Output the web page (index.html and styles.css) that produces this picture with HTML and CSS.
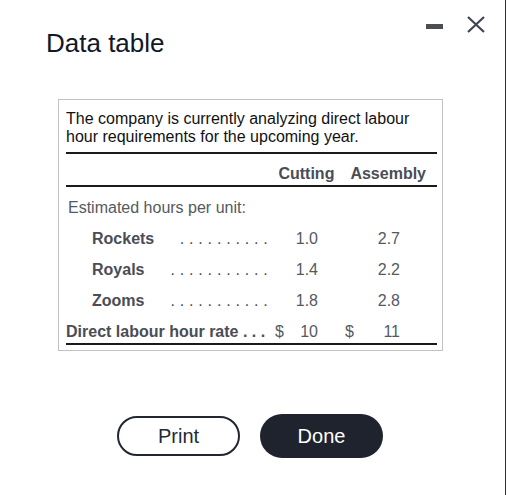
FILE: index.html
```html
<!DOCTYPE html>
<html lang="en">
<head>
<meta charset="utf-8">
<title>Data table</title>
<link rel="stylesheet" href="styles.css">
</head>
<body>
<div class="dialog">
  <header class="header">
    <h1 class="title">Data table</h1>
    <div class="controls">
      <svg width="70" height="40" viewBox="0 0 70 40" aria-hidden="true">
        <rect x="7" y="24" width="17" height="5" fill="#4b4e53"/>
        <path d="M49 17 L65 32 M65 17 L49 32" stroke="#3f4650" stroke-width="2.2" fill="none"/>
      </svg>
    </div>
  </header>

  <section class="box">
    <p class="desc">The company is currently analyzing direct labour hour requirements for the upcoming year.</p>
    <div class="rule"></div>
    <div class="head">
      <span>Cutting</span>
      <span>Assembly</span>
    </div>
    <div class="rule"></div>
    <div class="sub">Estimated hours per unit:</div>
    <div class="rows">
      <div class="row">
        <div class="lab item"><span>Rockets</span><span class="dots">. . . . . . . . . .</span></div>
        <div class="cur"></div><div class="v1">1.0</div><div class="cur2"></div><div class="v2">2.7</div>
      </div>
      <div class="row">
        <div class="lab item"><span>Royals</span><span class="dots">. . . . . . . . . . .</span></div>
        <div class="cur"></div><div class="v1">1.4</div><div class="cur2"></div><div class="v2">2.2</div>
      </div>
      <div class="row">
        <div class="lab item"><span>Zooms</span><span class="dots">. . . . . . . . . . .</span></div>
        <div class="cur"></div><div class="v1">1.8</div><div class="cur2"></div><div class="v2">2.8</div>
      </div>
      <div class="row">
        <div class="lab total"><span>Direct labour hour rate . . .</span></div>
        <div class="cur">$</div><div class="v1">10</div><div class="cur2">$</div><div class="v2">11</div>
      </div>
    </div>
    <div class="rule bottom"></div>
  </section>

  <div class="actions">
    <button class="btn print" type="button">Print</button>
    <button class="btn done" type="button">Done</button>
  </div>
</div>
</body>
</html>
```

FILE: styles.css
```css
* { box-sizing: border-box; }

html, body {
  margin: 0;
  padding: 0;
  background: #ffffff;
}

body {
  font-family: "Liberation Sans", Arial, sans-serif;
  color: #000;
}

.dialog {
  width: 506px;
  height: 495px;
  border-right: 1.5px solid #2e2e2e;
  overflow: hidden;
}

.header {
  display: flex;
  align-items: flex-start;
  height: 58px;
}

.title {
  margin: 28px 0 0 46px;
  font-size: 26px;
  line-height: 30px;
  font-weight: normal;
  color: #111827;
}

.controls {
  margin-left: auto;
  margin-right: 16px;
  height: 40px;
}

.controls svg { display: block; }

.box {
  margin: 41px 0 0 58px;
  width: 385px;
  border: 1px solid #c2c2c2;
  padding: 10px 5px 5px 7px;
  font-size: 16px;
}

.desc {
  margin: 0;
  line-height: 18px;
  color: #111;
}

.rule {
  height: 2px;
  background: #1a1a1a;
}

.desc + .rule { margin-top: 6px; }

.head {
  display: flex;
  justify-content: flex-end;
  gap: 16px;
  padding: 11px 11px 2px 0;
  line-height: 18px;
  font-weight: bold;
  color: #4a4d55;
}

.sub {
  padding: 12px 0 0 2px;
  line-height: 18px;
  color: #555a60;
}

.rows {
  margin-top: 13px;
  display: grid;
  row-gap: 13px;
}

.row {
  display: grid;
  grid-template-columns: 206px 18px 28px 42px 40px 1fr;
  line-height: 18px;
  color: #555a60;
}

.lab {
  display: flex;
  justify-content: space-between;
  padding-right: 4px;
  font-weight: bold;
  color: #4a4d55;
}

.lab.item { padding-left: 26px; }

.dots {
  font-weight: normal;
  color: #4a4d55;
  letter-spacing: 0.2px;
}

.cur { padding-left: 3px; }
.cur2 { padding-left: 27px; }
.v1, .v2 { text-align: right; }

.rule.bottom { margin-top: 2px; }

.actions {
  display: flex;
  align-items: center;
  gap: 20px;
  margin: 63px 0 0 117px;
}

.btn {
  font-family: "Liberation Sans", Arial, sans-serif;
  font-size: 20px;
  width: 123px;
  border-radius: 22px;
  cursor: pointer;
}

.print {
  height: 40px;
  background: #fff;
  border: 2px solid #22272f;
  color: #252a34;
}

.done {
  height: 44px;
  background: #1e232d;
  border: none;
  color: #fff;
}
```
